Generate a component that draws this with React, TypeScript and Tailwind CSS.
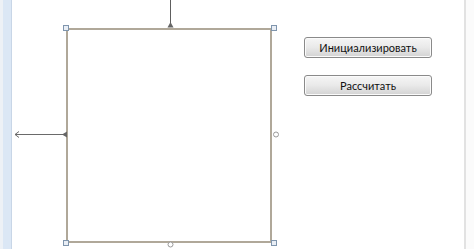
import React from "react";

function Handle({ x, y }: { x: number; y: number }) {
  return (
    <div
      className="absolute w-[6px] h-[6px] border border-[#7f95ad] bg-[#e9eef5]"
      style={{ left: x, top: y }}
    />
  );
}

function Btn({ label }: { label: string }) {
  return (
    <button
      className="w-[128px] h-[21px] rounded-[3px] border border-[#8a8a8a] bg-gradient-to-b from-[#f6f6f6] via-[#e9e9e9] to-[#d3d3d3] text-[11px] leading-none text-[#111] shadow-[inset_0_0_0_1px_#fbfbfb]"
      style={{ fontFamily: 'Lato, "Noto Sans", sans-serif' }}
    >
      {label}
    </button>
  );
}

export default function App() {
  return (
    <div className="relative w-[474px] h-[249px] flex bg-white overflow-hidden">
      {/* left strip */}
      <div className="w-[3px] h-full bg-[#edf1f6]" />
      <div className="w-[9px] h-full bg-[#dbe7f5] border-r border-[#c8d6e7]" />

      {/* canvas */}
      <div className="flex-1 flex items-start">
        <div className="ml-[54px] mt-[28px] w-[206px] h-[215px] border-2 border-[#b0a899] bg-white shrink-0" />
        <div className="ml-[32px] mt-[37px] flex flex-col gap-[17px]">
          <Btn label="Инициализировать" />
          <Btn label="Рассчитать" />
        </div>
      </div>

      {/* right edge */}
      <div className="w-[2px] h-full bg-[#e2e2e2]" />
      <div className="w-[8px] h-full bg-[#fbfbfb]" />

      {/* overlays: arrows and handles */}
      <svg className="absolute left-0 top-0 pointer-events-none" width="474" height="249">
        <line x1="170.5" y1="0" x2="170.5" y2="24" stroke="#5e5e5e" strokeWidth="1" />
        <polygon points="167.5,27.5 173.5,27.5 170.5,22" fill="#666" />
        <line x1="15" y1="134.5" x2="64" y2="134.5" stroke="#6a6a6a" strokeWidth="1" />
        <polyline points="19,131.5 15,134.5 19,137.5" fill="none" stroke="#6a6a6a" strokeWidth="1" />
        <polygon points="67,131.5 67,137.5 62,134.5" fill="#666" />
        <circle cx="276" cy="134.5" r="2.5" fill="#fff" stroke="#9a9a9a" strokeWidth="1" />
        <circle cx="170.5" cy="244.5" r="2.5" fill="#fff" stroke="#9a9a9a" strokeWidth="1" />
      </svg>
      <Handle x={63} y={25} />
      <Handle x={271} y={25} />
      <Handle x={63} y={240} />
      <Handle x={271} y={240} />
    </div>
  );
}
